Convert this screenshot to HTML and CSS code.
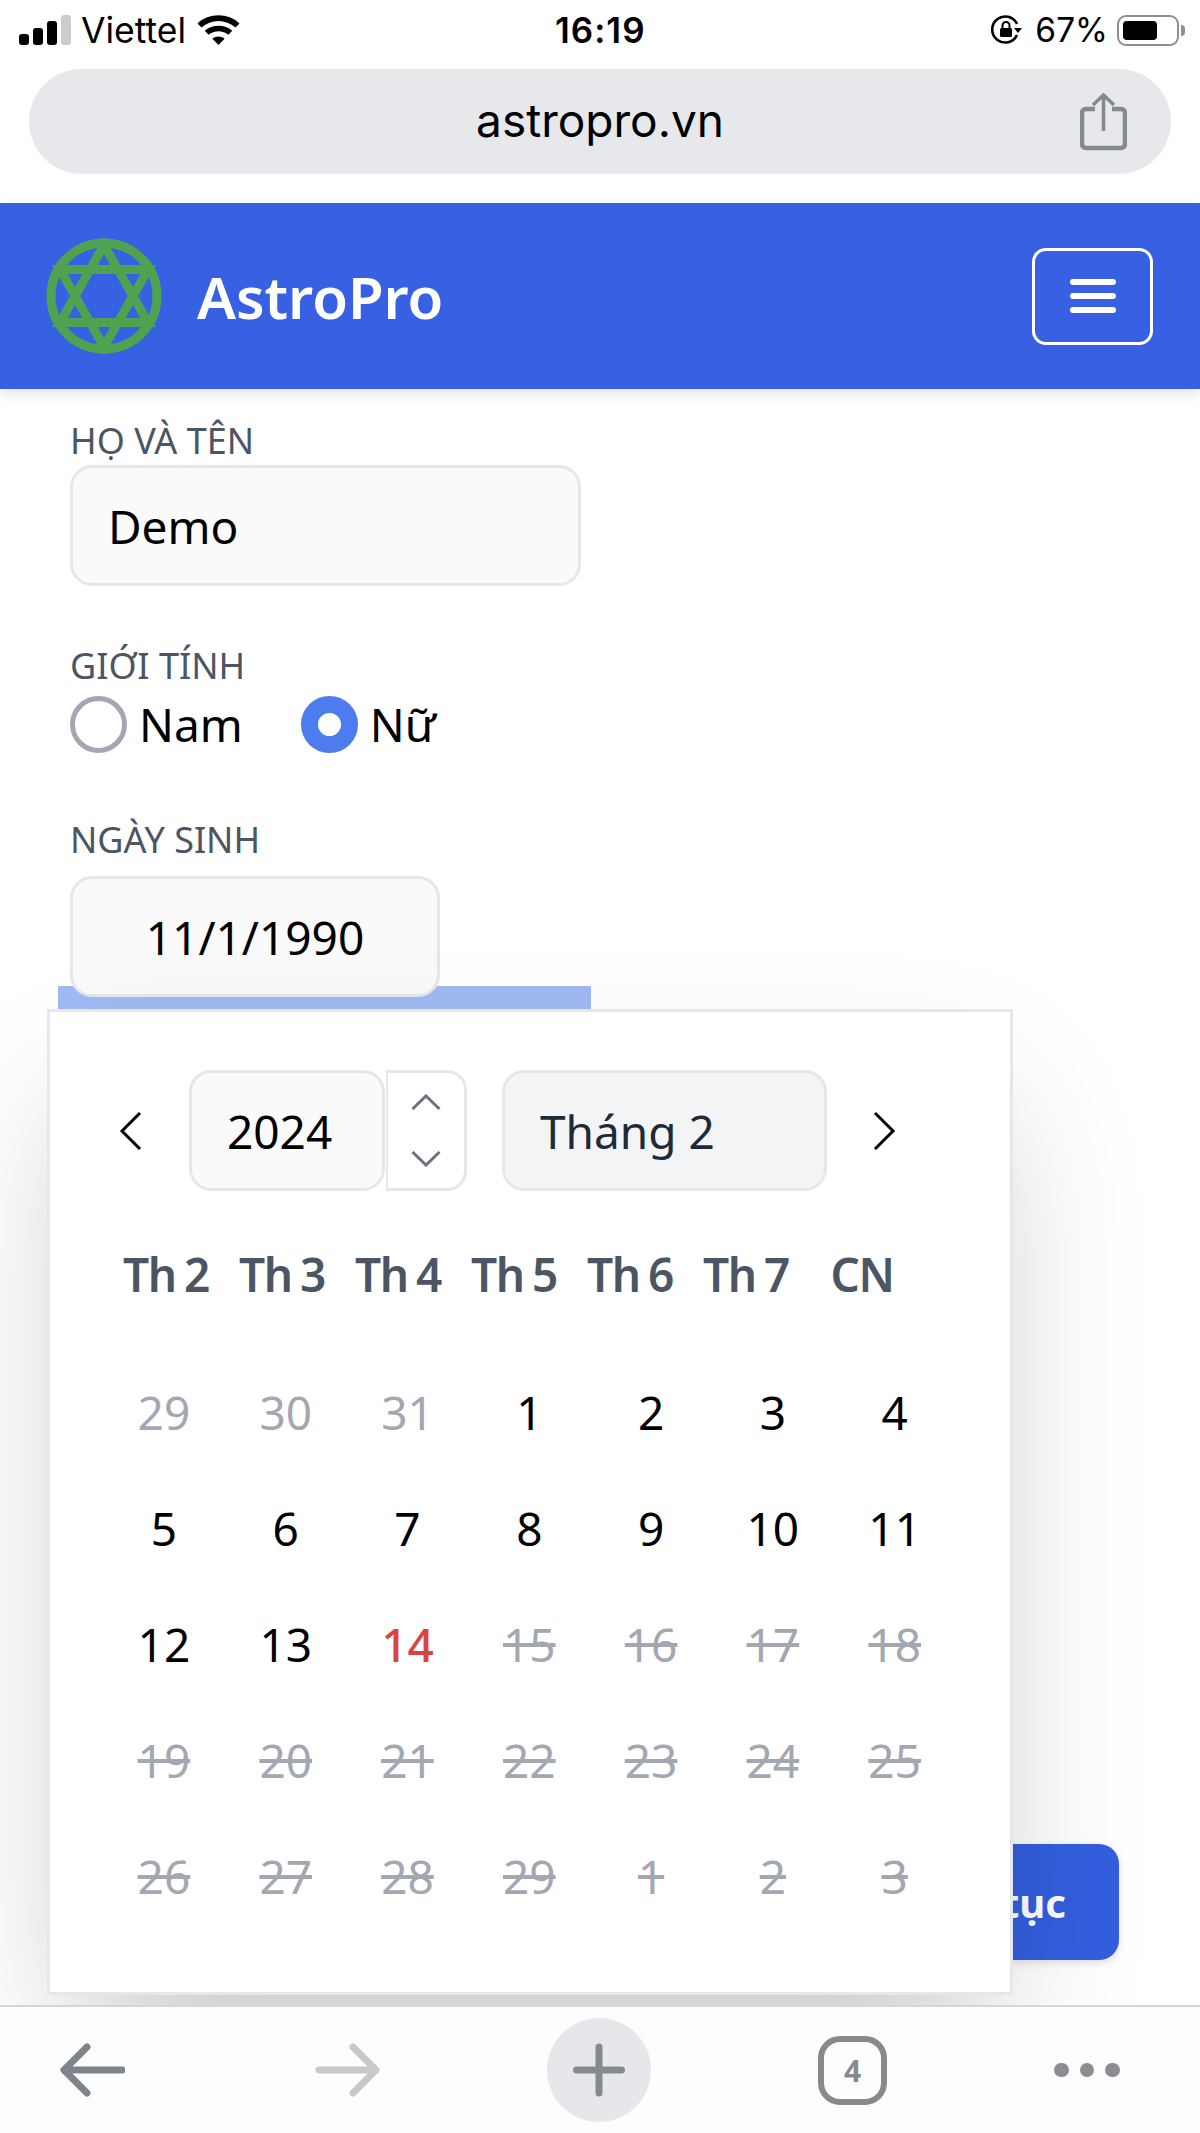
FILE: index.html
```html
<!DOCTYPE html>
<html lang="vi">
<head>
  <meta charset="UTF-8">
  <title>AstroPro</title>
  <link rel="stylesheet" href="styles.css">
</head>
<body>
<div class="screen">

  <!-- iOS status bar -->
  <div class="status-bar">
    <div class="status-left">
      <div class="signal"><i class="b1"></i><i class="b2"></i><i class="b3"></i><i class="b4"></i></div>
      <span class="carrier">Viettel</span>
      <svg class="wifi" viewBox="0 0 44 32"><path d="M22 31 15.700 24.500C19 21.300 25 21.300 28.300 24.500Z M11.800 20.500 7.800 16.300C15.500 9.300 28.500 9.300 36.200 16.300L32.200 20.500C26.500 15.500 17.500 15.500 11.800 20.500Z M4.500 13 .3 8.700C12 -2.400 32 -2.400 43.700 8.700L39.500 13C29.700 4 14.300 4 4.500 13Z"/></svg>
    </div>
    <span class="clock">16:19</span>
    <div class="status-right">
      <svg class="lock" viewBox="0 0 32 30" fill="none"><path d="M27 20A13 13 0 1 1 27 9" stroke="#000" stroke-width="2.600"/><path d="M24 13h8l-4 5z" fill="#000"/><rect x="10" y="13" width="12" height="9" rx="1.500" fill="#000"/><path d="M12.500 13v-2.500a3.500 3.500 0 0 1 7 0V13" stroke="#000" stroke-width="2"/></svg>
      <span class="percent">67%</span>
      <div class="battery"><div class="battery-fill"></div></div>
      <div class="battery-tip"></div>
    </div>
  </div>

  <!-- address bar -->
  <div class="address-bar">
    <span class="url">astropro.vn</span>
    <svg class="share" viewBox="0 0 47 58" fill="none" stroke="#85898d"><path d="M15 16H6a4 4 0 0 0-4 4v31a4 4 0 0 0 4 4h35a4 4 0 0 0 4-4V20a4 4 0 0 0-4-4h-9" stroke-width="4.500"/><path d="M23.500 38V3M13 12 23.500 2 34 12" stroke-width="3.500"/></svg>
  </div>

  <!-- site header -->
  <header class="site-header">
    <div class="brand">
      <svg class="logo" viewBox="0 0 116 116" fill="none" stroke="#4fa24f" stroke-width="9"><circle cx="58" cy="58" r="53"/><path d="M58 7 102 84.500H14Z"/><path d="M58 109 102 31.500H14Z"/></svg>
      <span class="brand-name">AstroPro</span>
    </div>
    <div class="menu-btn"><span></span><span></span><span></span></div>
  </header>

  <!-- form -->
  <main class="content">
    <div class="focus-strip"></div>

    <div class="label">HỌ VÀ TÊN</div>
    <div class="input input-name">Demo</div>

    <div class="label label-gap">GIỚI TÍNH</div>
    <div class="radios">
      <div class="radio-item"><span class="radio"></span>Nam</div>
      <div class="radio-item"><span class="radio checked"></span>Nữ</div>
    </div>

    <div class="label label-dob">NGÀY SINH</div>
    <div class="input input-date">11/1/1990</div>

    <div class="actions"><div class="next-btn">Tiếp tục</div></div>

    <!-- date picker popup -->
    <div class="picker">
      <div class="picker-head">
        <svg class="chevron" viewBox="0 0 23 40" fill="none"><path d="M21 2 3 20l18 18"/></svg>
        <div class="year">2024</div>
        <div class="spinner">
          <svg viewBox="0 0 30 16" fill="none"><path d="M1.500 15 15 2l13.500 13"/></svg>
          <svg viewBox="0 0 30 16" fill="none"><path d="M1.500 1 15 14 28.500 1"/></svg>
        </div>
        <div class="month">Tháng 2</div>
        <svg class="chevron chevron-next" viewBox="0 0 23 40" fill="none"><path d="M2 2l18 18L2 38"/></svg>
      </div>

      <div class="weekdays">
        <span>Th 2</span><span>Th 3</span><span>Th 4</span><span>Th 5</span><span>Th 6</span><span>Th 7</span><span>CN</span>
      </div>

      <div class="days">
        <span class="muted">29</span><span class="muted">30</span><span class="muted">31</span><span>1</span><span>2</span><span>3</span><span>4</span>
        <span>5</span><span>6</span><span>7</span><span>8</span><span>9</span><span>10</span><span>11</span>
        <span>12</span><span>13</span><span class="today">14</span><span class="off">15</span><span class="off">16</span><span class="off">17</span><span class="off">18</span>
        <span class="off">19</span><span class="off">20</span><span class="off">21</span><span class="off">22</span><span class="off">23</span><span class="off">24</span><span class="off">25</span>
        <span class="off">26</span><span class="off">27</span><span class="off">28</span><span class="off">29</span><span class="off">1</span><span class="off">2</span><span class="off">3</span>
      </div>
    </div>
  </main>

  <!-- browser toolbar -->
  <footer class="toolbar">
    <svg class="tool-arrow tool-back" viewBox="0 0 65 54" fill="none" stroke="#7e858a" stroke-width="7" stroke-linecap="round" stroke-linejoin="round"><path d="M62 27H5M27 4 4 27l23 23"/></svg>
    <svg class="tool-arrow" viewBox="0 0 65 54" fill="none" stroke="#c9c9c9" stroke-width="7" stroke-linecap="round" stroke-linejoin="round"><path d="M4 27h57M38 4l23 23-23 23"/></svg>
    <div class="new-tab">
      <svg viewBox="0 0 52 54" fill="none" stroke="#858a8d" stroke-width="7" stroke-linecap="round"><path d="M3.500 27h45M26 4v46"/></svg>
    </div>
    <div class="tabs-count">4</div>
    <div class="more"><i></i><i></i><i></i></div>
  </footer>

</div>
</body>
</html>
```

FILE: styles.css
```css
body {
  margin: 0;
  background: #fff;
  font-family: "Noto Sans", "Open Sans", sans-serif;
}

.screen {
  width: 1200px;
  height: 2133px;
  display: flex;
  flex-direction: column;
  overflow: hidden;
}

/* Status bar */
.status-bar {
  height: 69px;
  flex: none;
  display: flex;
  align-items: center;
  justify-content: space-between;
  position: relative;
  padding: 0 15px 9px 19px;
  box-sizing: border-box;
  font-family: Inter, sans-serif;
  font-size: 33px;
  color: #000;
}

.status-left, .status-right {
  display: flex;
  align-items: center;
}

.signal {
  display: flex;
  align-items: flex-end;
  gap: 4px;
  height: 30px;
  margin-right: 10px;
}

.signal i {
  width: 10px;
  border-radius: 3px;
  background: #000;
}

.signal .b1 { height: 11px; }
.signal .b2 { height: 17px; }
.signal .b3 { height: 24px; }
.signal .b4 { height: 30px; background: #ccc; }

.carrier {
  font-size: 35.5px;
}

.wifi {
  width: 43px;
  height: 31px;
  margin-left: 11px;
}

.clock {
  position: absolute;
  left: 555px;
  font-size: 35px;
  font-weight: 600;
  letter-spacing: 1px;
}

.lock {
  width: 32px;
  height: 30px;
  margin-right: 13px;
}

.percent {
  font-size: 33.5px;
  margin-right: 9px;
}

.battery {
  width: 62px;
  height: 31px;
  box-sizing: border-box;
  border: 2px solid #8f8f8f;
  border-radius: 9px;
  padding: 4px;
}

.battery-fill {
  width: 34px;
  height: 100%;
  background: #000;
  border-radius: 4px;
}

.battery-tip {
  width: 4px;
  height: 11px;
  margin-left: 2px;
  background: #8f8f8f;
  border-radius: 0 4px 4px 0;
}

/* Address bar */
.address-bar {
  height: 105px;
  flex: none;
  margin: 0 29px 29px;
  background: #e6e8eb;
  border-radius: 53px;
  position: relative;
  display: flex;
  align-items: center;
  justify-content: center;
}

.url {
  font-family: Inter, sans-serif;
  font-size: 46px;
  color: #000;
  margin-bottom: 4px;
}

.share {
  position: absolute;
  left: 1051px;
  top: 24px;
  width: 47px;
  height: 58px;
}

/* Header */
.site-header {
  height: 186px;
  flex: none;
  background: #3860e2;
  display: flex;
  align-items: center;
  justify-content: space-between;
  padding: 0 47px 0 46px;
  box-shadow: 0 4px 12px rgba(0, 0, 0, 0.12);
  position: relative;
  z-index: 3;
}

.brand {
  display: flex;
  align-items: center;
}

.logo {
  width: 116px;
  height: 116px;
  margin-right: 35px;
}

.brand-name {
  color: #fff;
  font-size: 58px;
  font-weight: 600;
}

.menu-btn {
  width: 121px;
  height: 97px;
  box-sizing: border-box;
  border: 3px solid #fff;
  border-radius: 14px;
  display: flex;
  flex-direction: column;
  align-items: center;
  justify-content: center;
  gap: 8px;
}

.menu-btn span {
  width: 46px;
  height: 6px;
  background: #fff;
  border-radius: 3px;
}

/* Form */
.content {
  flex: 1;
  position: relative;
  padding: 30px 81px 0 70px;
}

.label {
  font-size: 36px;
  line-height: 44px;
  color: #4b5563;
  margin-bottom: 2px;
}

.label-gap {
  margin-top: 58px;
}

.label-dob {
  margin-top: 65px;
  margin-bottom: 14px;
}

.input {
  height: 121px;
  box-sizing: border-box;
  background: #fafafb;
  border: 3px solid #e5e7eb;
  border-radius: 22px;
  display: flex;
  align-items: center;
  font-size: 46px;
  color: #000;
  position: relative;
  z-index: 1;
}

.input-name {
  width: 511px;
  padding-left: 35px;
}

.input-date {
  width: 370px;
  justify-content: center;
}

.focus-strip {
  position: absolute;
  left: 58px;
  top: 597px;
  width: 533px;
  height: 23px;
  background: #a0baf3;
}

.radios {
  display: flex;
  gap: 58px;
  margin-top: 8px;
}

.radio-item {
  display: flex;
  align-items: center;
  gap: 12px;
  font-size: 46px;
  line-height: 57px;
  color: #000;
}

.radio {
  width: 57px;
  height: 57px;
  box-sizing: border-box;
  border: 5px solid #a3a7b1;
  border-radius: 50%;
  background: #fff;
}

.radio.checked {
  border: 17px solid #4d7cef;
}

.actions {
  display: flex;
  justify-content: flex-end;
  margin-top: 847px;
}

.next-btn {
  height: 116px;
  box-sizing: border-box;
  padding: 0 53px;
  display: flex;
  align-items: center;
  background: #335fdf;
  color: #fff;
  font-size: 40px;
  font-weight: 700;
  border-radius: 20px;
  box-shadow: 0 3px 8px rgba(0, 0, 0, 0.12);
}

/* Date picker */
.picker {
  position: absolute;
  left: 47px;
  top: 620px;
  width: 966px;
  box-sizing: border-box;
  background: #fff;
  border: 3px solid #e5e7eb;
  padding: 58px 0 58px 69px;
  box-shadow: 0 72px 145px -35px rgba(0, 0, 0, 0.25);
  z-index: 2;
}

.picker-head {
  display: flex;
  align-items: center;
}

.chevron {
  width: 23px;
  height: 40px;
  margin-right: 47px;
  stroke: #000;
  stroke-width: 3;
}

.chevron-next {
  margin: 0 0 0 46px;
}

.year, .month {
  height: 121px;
  box-sizing: border-box;
  border: 3px solid #e5e7eb;
  border-radius: 22px;
  display: flex;
  align-items: center;
  font-size: 46px;
}

.year {
  width: 196px;
  background: #fafafb;
  color: #000;
  padding-left: 35px;
}

.spinner {
  width: 81px;
  height: 121px;
  box-sizing: border-box;
  margin: 0 35px 0 1px;
  border: 3px solid #e5e7eb;
  border-left-width: 2px;
  border-radius: 0 20px 20px 0;
  display: flex;
  flex-direction: column;
  align-items: center;
  gap: 41px;
  padding-top: 21px;
}

.spinner svg {
  width: 30px;
  height: 16px;
  stroke: #6b7280;
  stroke-width: 3;
}

.month {
  width: 325px;
  background: #f3f4f6;
  color: #1f2937;
  padding-left: 35px;
}

.weekdays {
  display: grid;
  grid-template-columns: repeat(7, 116px);
  margin: 53px 0 0 -11px;
  font-size: 46px;
  line-height: 60px;
  font-weight: 600;
  letter-spacing: -1.5px;
  word-spacing: -2px;
  color: #4b5563;
  text-align: center;
}

.days {
  display: grid;
  grid-template-columns: repeat(7, 121.8px);
  grid-auto-rows: 116px;
  align-items: center;
  margin: 50px 0 0 -16px;
  font-size: 46px;
  color: #000;
  text-align: center;
}

.days .muted {
  color: #a3a7b1;
}

.days .today {
  color: #d9443f;
  font-weight: 500;
}

.days .off {
  color: #a3a7b1;
  text-decoration: line-through;
}

/* Browser toolbar */
.toolbar {
  height: 128px;
  flex: none;
  box-sizing: border-box;
  background: #fdfdfd;
  border-top: 2px solid #d6d6d6;
  display: flex;
  align-items: center;
  gap: 167px;
  padding-left: 60px;
  position: relative;
  z-index: 4;
}

.tool-arrow {
  width: 65px;
  height: 54px;
}

.tool-back {
  margin-right: 23px;
}

.new-tab {
  width: 104px;
  height: 104px;
  border-radius: 50%;
  background: #e6e7eb;
  display: flex;
  align-items: center;
  justify-content: center;
}

.new-tab svg {
  width: 52px;
  height: 54px;
}

.tabs-count {
  width: 69px;
  height: 69px;
  box-sizing: border-box;
  border: 6px solid #868a8f;
  border-radius: 22px;
  display: flex;
  align-items: center;
  justify-content: center;
  font-size: 30px;
  font-weight: 700;
  color: #868a8f;
}

.more {
  display: flex;
  gap: 11px;
}

.more i {
  width: 14.5px;
  height: 14.5px;
  border-radius: 50%;
  background: #8a8d93;
}
```
